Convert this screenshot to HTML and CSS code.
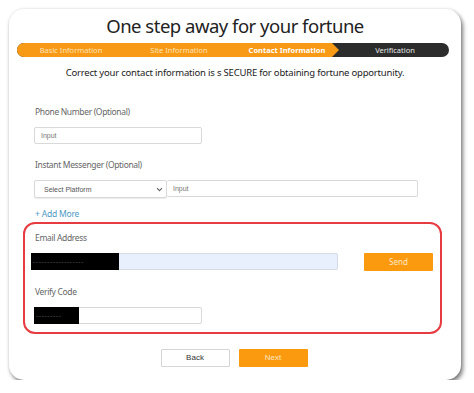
FILE: index.html
```html
<!DOCTYPE html>
<html lang="en">
<head>
    <meta charset="UTF-8">
    <meta name="viewport" content="width=device-width, initial-scale=1.0">
    <title>Contact Information</title>
    <link rel="stylesheet" href="styles.css">
</head>
<body>
    <div class="card">
        <div class="title">One step away for your fortune</div>

        <div class="steps">
            <div class="step done">Basic Information</div>
            <div class="step done">Site Information</div>
            <div class="step current">Contact Information</div>
            <div class="step">Verification</div>
        </div>

        <div class="subtitle">Correct your contact information is s SECURE for obtaining fortune opportunity.</div>

        <div class="form">
            <div class="label first">Phone Number (Optional)</div>
            <div class="field short"><span class="placeholder">Input</span></div>

            <div class="label">Instant Messenger (Optional)</div>
            <div class="row">
                <div class="field select">
                    <span class="placeholder">Select Platform</span>
                    <svg class="chevron" width="7" height="5" viewBox="0 0 7 5"><path d="M1 1.2 L3.5 3.7 L6 1.2" fill="none" stroke="#666" stroke-width="1.1"/></svg>
                </div>
                <div class="field messenger"><span class="placeholder">Input</span></div>
            </div>

            <div class="add-more">+ Add More</div>

            <div class="highlight">
                <div class="label top">Email Address</div>
                <div class="row">
                    <div class="field email"><span class="redact wide">------------------</span></div>
                    <div class="btn send">Send</div>
                </div>

                <div class="label">Verify Code</div>
                <div class="field short"><span class="redact">---------</span></div>
            </div>

            <div class="actions">
                <div class="btn back">Back</div>
                <div class="btn next">Next</div>
            </div>
        </div>
    </div>
</body>
</html>
```

FILE: styles.css
```css
/* Basic reset */
* {
    margin: 0;
    padding: 0;
    box-sizing: border-box;
}

body {
    font-family: 'Noto Sans', 'Open Sans', sans-serif;
    background-color: #fff;
    color: #222;
    padding: 9px 0 0 9px;
}

.card {
    width: 452px;
    height: 371px;
    background-color: #fff;
    border-radius: 15px;
    box-shadow: 2px 3px 4px rgba(0, 0, 0, 0.5), 0 0 3px rgba(0, 0, 0, 0.12);
    padding: 3px 0 0 0;
}

.title {
    height: 27px;
    line-height: 27px;
    font-size: 18.5px;
    letter-spacing: -0.5px;
    text-align: center;
    color: #222;
}

.steps {
    display: flex;
    margin: 4px 0 0 8px;
    width: 432px;
    height: 14px;
    background-color: #2c2c2c;
    border-radius: 7px;
    overflow: hidden;
}

.step {
    flex: 1;
    font-size: 7.5px;
    line-height: 14px;
    text-align: center;
    color: #e8e8e8;
}

.step.done {
    background-color: #f99a16;
    color: #fde2b8;
}

.step.current {
    background-color: #f99a16;
    color: #fff;
    font-weight: bold;
    clip-path: polygon(0 0, calc(100% - 9px) 0, calc(100% - 2px) 50%, calc(100% - 9px) 100%, 0 100%);
}

.subtitle {
    margin-top: 9px;
    line-height: 14px;
    font-size: 9.5px;
    letter-spacing: -0.2px;
    text-align: center;
    color: #222;
}

.form {
    padding-left: 25px;
}

.label {
    margin-top: 14px;
    line-height: 14px;
    font-size: 8.5px;
    letter-spacing: -0.35px;
    color: #666;
    padding-left: 1px;
}

.label.first {
    margin-top: 25px;
}

.label.top {
    margin-top: 0;
}

.field {
    margin-top: 8px;
    height: 17px;
    border: 1px solid #d9d9d9;
    border-radius: 2px;
    background-color: #fff;
    display: flex;
    align-items: center;
    font-family: 'Liberation Sans', Arial, sans-serif;
}

.field.short {
    width: 168px;
}

.placeholder {
    font-size: 7px;
    color: #777;
    padding-left: 6px;
}

.row {
    display: flex;
    align-items: flex-start;
}

.row .field {
    margin-top: 8px;
}

.field.select {
    width: 133px;
    height: 18px;
    justify-content: space-between;
    padding-right: 3px;
    box-shadow: 0 1px 1px rgba(0, 0, 0, 0.08);
}

.field.select .placeholder {
    padding-left: 9px;
    color: #555;
}

.field.messenger {
    width: 251px;
    border-left: none;
}

.add-more {
    margin-top: 9px;
    line-height: 14px;
    font-size: 8.5px;
    letter-spacing: -0.2px;
    color: #4d98c4;
    padding-left: 1px;
}

.highlight {
    margin: 1px 0 0 -11px;
    width: 419px;
    height: 112px;
    border: 2.5px solid #e73b42;
    border-radius: 12px;
    padding: 7px 0 0 9px;
}

.field.email {
    width: 307px;
    margin-left: -3px;
    background-color: #e8f0fe;
    border-color: #d5dbe6;
    align-items: stretch;
}

.redact {
    background-color: #000;
    color: #555;
    font-size: 7px;
    letter-spacing: 0.5px;
    padding: 0 2px;
    display: flex;
    align-items: center;
    width: 45px;
    overflow: hidden;
    white-space: nowrap;
    margin: -1px 0 -1px -1px;
    align-self: stretch;
}

.redact.wide {
    width: 88px;
}

.btn {
    height: 18px;
    width: 69px;
    line-height: 18px;
    text-align: center;
    font-size: 8px;
    border-radius: 1px;
    font-family: 'Liberation Sans', Arial, sans-serif;
}

.btn.send {
    margin: 8px 0 0 26px;
    background-color: #fb9a0e;
    color: #fde7c4;
    font-family: 'Noto Sans', sans-serif;
}

.actions {
    display: flex;
    justify-content: center;
    gap: 9px;
    margin: 15px 0 0 -27px;
}

.btn.back {
    background-color: #fff;
    border: 1px solid #d6d6d6;
    color: #333;
    line-height: 16px;
}

.btn.next {
    background-color: #fb9a0e;
    color: #fde7c4;
}

.chevron {
    display: block;
}
```
